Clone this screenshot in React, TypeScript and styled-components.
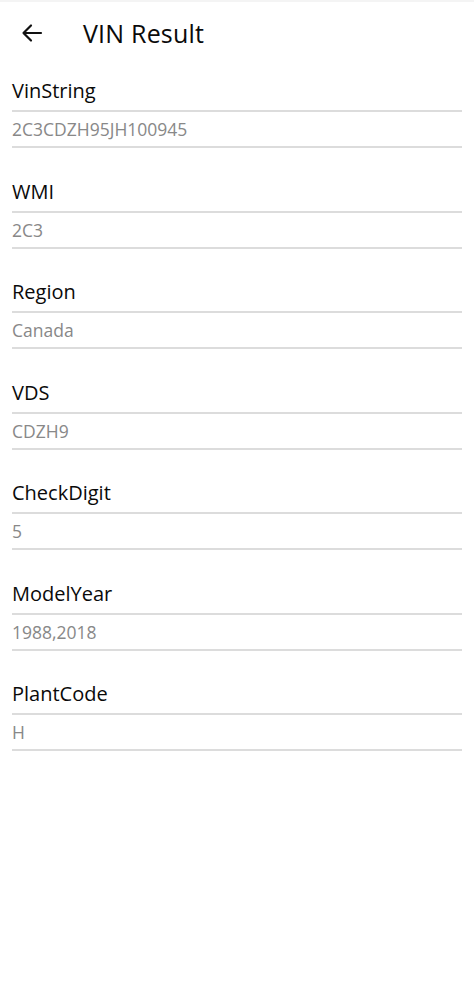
import styled, { createGlobalStyle } from "styled-components";

const GlobalStyle = createGlobalStyle`
  body {
    margin: 0;
    background: #ffffff;
    font-family: "Open Sans", "Noto Sans", sans-serif;
  }
`;

const fields = [
  { label: "VinString", value: "2C3CDZH95JH100945" },
  { label: "WMI", value: "2C3" },
  { label: "Region", value: "Canada" },
  { label: "VDS", value: "CDZH9" },
  { label: "CheckDigit", value: "5" },
  { label: "ModelYear", value: "1988,2018" },
  { label: "PlantCode", value: "H" },
];

const App = () => {
  return (
    <Page>
      <GlobalStyle />
      <TopBar>
        <BackButton aria-label="back">
          <svg width="24" height="24" viewBox="0 0 24 24" fill="none">
            <path
              d="M21 12H3.5M11 4.5L3.5 12l7.5 7.5"
              stroke="#111"
              strokeWidth="2.2"
              strokeLinecap="round"
              strokeLinejoin="round"
            />
          </svg>
        </BackButton>
        <Title>VIN Result</Title>
      </TopBar>
      <List>
        {fields.map((f) => (
          <Field key={f.label}>
            <Label>{f.label}</Label>
            <Value>{f.value}</Value>
          </Field>
        ))}
      </List>
    </Page>
  );
};

export default App;

// STYLE
const Page = styled.div`
  width: 474px;
  min-height: 987px;
  background: #fff;
  border-top: 2px solid #f4f4f4;
  box-sizing: border-box;
`;

const TopBar = styled.header`
  height: 62px;
  display: flex;
  align-items: center;
  padding-left: 20px;
`;

const BackButton = styled.div`
  width: 24px;
  height: 24px;
  display: flex;
  align-items: center;
  justify-content: center;
`;

const Title = styled.h1`
  margin: 0 0 0 39px;
  font-size: 25px;
  font-weight: 400;
  color: #0a0a0a;
  letter-spacing: 0.2px;
`;

const List = styled.div`
  padding: 13px 12px 0;
  display: flex;
  flex-direction: column;
  gap: 29.5px;
`;

const Field = styled.div`
  display: flex;
  flex-direction: column;
`;

const Label = styled.div`
  font-size: 20px;
  line-height: 28px;
  color: #0a0a0a;
  padding-bottom: 5px;
  border-bottom: 2px solid #dcdcdc;
`;

const Value = styled.div`
  font-size: 17.5px;
  line-height: 22px;
  color: #888;
  padding: 6px 0;
  border-bottom: 2px solid #dcdcdc;
`;
